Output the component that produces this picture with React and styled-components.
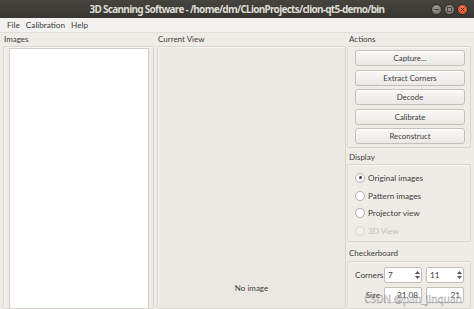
import styled, { createGlobalStyle } from 'styled-components';
import React from 'react';

const GlobalStyle = createGlobalStyle`
  html, body {
    margin: 0;
    padding: 0;
    overflow: hidden;
    background: #efebe7;
  }
  body {
    font-family: Lato, "Noto Sans", sans-serif;
    color: #3c3c3c;
  }
`;

const Window = styled.div`
  width: 474px;
  height: 309px;
  display: flex;
  flex-direction: column;
  background: #efebe7;
  position: relative;
  overflow: hidden;
`;

const TitleBar = styled.div`
  height: 18px;
  flex: none;
  display: grid;
  grid-template-columns: 1fr auto 1fr;
  align-items: center;
  background: linear-gradient(#45443f, #373632);
  padding: 0 6px;
`;

const TitleText = styled.span`
  grid-column: 2;
  font-family: "Noto Sans", sans-serif;
  font-size: 10px;
  font-weight: 700;
  color: #dfdbd2;
  letter-spacing: -0.72px;
  white-space: nowrap;
`;

const WinButtons = styled.div`
  grid-column: 3;
  justify-self: end;
  display: flex;
  gap: 2px;
`;

const WinButton = styled.div`
  width: 9px;
  height: 9px;
  border-radius: 50%;
  background: ${p => (p.$close ? 'radial-gradient(circle at 50% 35%, #f27a4f, #d9481d)' : 'radial-gradient(circle at 50% 35%, #9a9994, #6f6e69)')};
  border: 0.5px solid #2e2d2a;
  display: flex;
  align-items: center;
  justify-content: center;
`;

const MenuBar = styled.div`
  height: 14px;
  flex: none;
  display: flex;
  align-items: center;
  gap: 6px;
  padding: 0 7px;
  font-size: 8.2px;
  color: #3c3c3c;
  background: #f2f1ef;
  border-bottom: 1px solid #e2dfdb;
`;

const MenuItem = styled.span`
  color: #3c3c3c;
`;

const Main = styled.div`
  flex: 1;
  display: flex;
  padding: 0 3px;
  min-height: 0;
`;

const Column = styled.div`
  width: ${p => p.$w}px;
  margin-left: ${p => p.$ml || 0}px;
  flex: none;
  display: flex;
  flex-direction: column;
`;

const GroupLabel = styled.div`
  height: ${p => p.$h || 13}px;
  line-height: ${p => p.$h || 13}px;
  margin-top: ${p => p.$mt || 0}px;
  font-size: 8px;
  padding-left: ${p => p.$indent || 1}px;
  flex: none;
`;

const Frame = styled.div`
  border: 1px solid #d9d5d0;
  box-shadow: inset 1px 1px 0 #f7f5f3;
  border-radius: 2px;
  display: flex;
  flex-direction: column;
  ${p => p.$grow && 'flex: 1;'}
`;

const ImagesFrame = styled(Frame)`
  padding: 1px 4px 0 5px;
`;

const ListBox = styled.div`
  flex: 1;
  background: #ffffff;
  border: 1px solid #d3cfca;
  border-bottom: none;
`;

const ViewFrame = styled(Frame)`
  background: #ebe8e4;
  align-items: center;
  justify-content: flex-end;
  padding-bottom: 15px;
`;

const NoImage = styled.span`
  font-size: 8px;
  color: #3c3c3c;
`;

const ActionsFrame = styled(Frame)`
  padding: 3px 5px 3px 7px;
  gap: 3.5px;
`;

const Button = styled.button`
  height: 16px;
  padding: 0;
  border: 1px solid #c4c0bb;
  border-radius: 3px;
  background: linear-gradient(#f9f8f7, #ebe9e6);
  box-shadow: inset 0 1px 0 #ffffff;
  font-family: inherit;
  font-size: 7.8px;
  color: #3c3c3c;
`;

const DisplayFrame = styled(Frame)`
  padding: 4px 8px 1px 7px;
`;

const RadioRow = styled.div`
  height: 17.8px;
  display: flex;
  align-items: center;
  gap: 3px;
  font-size: 8.2px;
  color: ${p => (p.$disabled ? '#c4c1bd' : '#3c3c3c')};
`;

const RadioDot = styled.span`
  width: 8px;
  height: 8px;
  border-radius: 50%;
  border: 1px solid ${p => (p.$disabled ? '#dcd9d5' : '#b3afaa')};
  background: ${p => (p.$disabled ? '#f1efec' : '#ffffff')};
  display: flex;
  align-items: center;
  justify-content: center;
  &::after {
    content: '';
    width: 3px;
    height: 3px;
    border-radius: 50%;
    background: ${p => (p.$checked ? '#3c3c3c' : 'transparent')};
  }
`;

const CheckerFrame = styled(Frame)`
  flex: 1;
  padding: 4px 5px 0 7px;
  gap: 3px;
`;

const FieldRow = styled.div`
  display: flex;
  align-items: center;
  gap: 4px;
  height: 17px;
`;

const FieldLabel = styled.span`
  width: 25px;
  text-align: right;
  font-size: 8.2px;
`;

const SpinBox = styled.div`
  width: 38px;
  height: 16px;
  box-sizing: border-box;
  background: #ffffff;
  border: 1px solid #c2beb9;
  border-radius: 2px;
  display: flex;
  align-items: center;
  font-size: 8.2px;
`;

const SpinValue = styled.span`
  flex: 1;
  padding: 0 3px;
  text-align: ${p => (p.$right ? 'right' : 'left')};
`;

const SpinArrows = styled.div`
  width: 7px;
  height: 100%;
  display: flex;
  flex-direction: column;
  align-items: center;
  justify-content: center;
  gap: 2px;
`;

const Watermark = styled.div`
  position: absolute;
  right: 12px;
  bottom: 3px;
  font-family: "Noto Sans", sans-serif;
  font-size: 10px;
  color: rgba(255, 255, 255, 0.55);
  -webkit-text-stroke: 0.4px rgba(110, 110, 110, 0.8);
  letter-spacing: 0.1px;
`;

const Arrows = () => (
  <SpinArrows>
    <svg width="5" height="3" viewBox="0 0 5 3"><path d="M0 3 L2.5 0 L5 3 Z" fill="#555" /></svg>
    <svg width="5" height="3" viewBox="0 0 5 3"><path d="M0 0 L2.5 3 L5 0 Z" fill="#555" /></svg>
  </SpinArrows>
);

const Radio = ({ label, checked, disabled }) => (
  <RadioRow $disabled={disabled}>
    <RadioDot $checked={checked} $disabled={disabled} />
    {label}
  </RadioRow>
);

export default function App() {
  return (
    <Window>
      <GlobalStyle />
      <TitleBar>
        <TitleText>3D Scanning Software - /home/dm/CLionProjects/clion-qt5-demo/bin</TitleText>
        <WinButtons>
          <WinButton>
            <svg width="5" height="5" viewBox="0 0 5 5"><path d="M0.5 2.5 H4.5" stroke="#3a3935" strokeWidth="1" /></svg>
          </WinButton>
          <WinButton>
            <svg width="5" height="5" viewBox="0 0 5 5"><rect x="0.5" y="0.5" width="4" height="4" fill="none" stroke="#3a3935" strokeWidth="0.8" /></svg>
          </WinButton>
          <WinButton $close>
            <svg width="5" height="5" viewBox="0 0 5 5"><path d="M0.7 0.7 L4.3 4.3 M4.3 0.7 L0.7 4.3" stroke="#5a1c08" strokeWidth="1" /></svg>
          </WinButton>
        </WinButtons>
      </TitleBar>

      <MenuBar>
        <MenuItem>File</MenuItem>
        <MenuItem>Calibration</MenuItem>
        <MenuItem>Help</MenuItem>
      </MenuBar>

      <Main>
        <Column $w={151}>
          <GroupLabel>Images</GroupLabel>
          <ImagesFrame $grow>
            <ListBox />
          </ImagesFrame>
        </Column>

        <Column $w={189} $ml={3}>
          <GroupLabel>Current View</GroupLabel>
          <ViewFrame $grow>
            <NoImage>No image</NoImage>
          </ViewFrame>
        </Column>

        <Column $w={124} $ml={1}>
          <GroupLabel $indent={2}>Actions</GroupLabel>
          <ActionsFrame>
            <Button>Capture...</Button>
            <Button>Extract Corners</Button>
            <Button>Decode</Button>
            <Button>Calibrate</Button>
            <Button>Reconstruct</Button>
          </ActionsFrame>

          <GroupLabel $indent={2} $mt={3}>Display</GroupLabel>
          <DisplayFrame>
            <Radio label="Original images" checked />
            <Radio label="Pattern images" />
            <Radio label="Projector view" />
            <Radio label="3D View" disabled />
          </DisplayFrame>

          <GroupLabel $indent={2} $mt={3} $h={16}>Checkerboard</GroupLabel>
          <CheckerFrame>
            <FieldRow>
              <FieldLabel>Corners</FieldLabel>
              <SpinBox><SpinValue>7</SpinValue><Arrows /></SpinBox>
              <SpinBox><SpinValue>11</SpinValue><Arrows /></SpinBox>
            </FieldRow>
            <FieldRow>
              <FieldLabel>Size</FieldLabel>
              <SpinBox><SpinValue $right>21.08</SpinValue></SpinBox>
              <SpinBox><SpinValue $right>21</SpinValue></SpinBox>
            </FieldRow>
          </CheckerFrame>
        </Column>
      </Main>

      <Watermark>CSDN @pan_jinquan</Watermark>
    </Window>
  );
}
